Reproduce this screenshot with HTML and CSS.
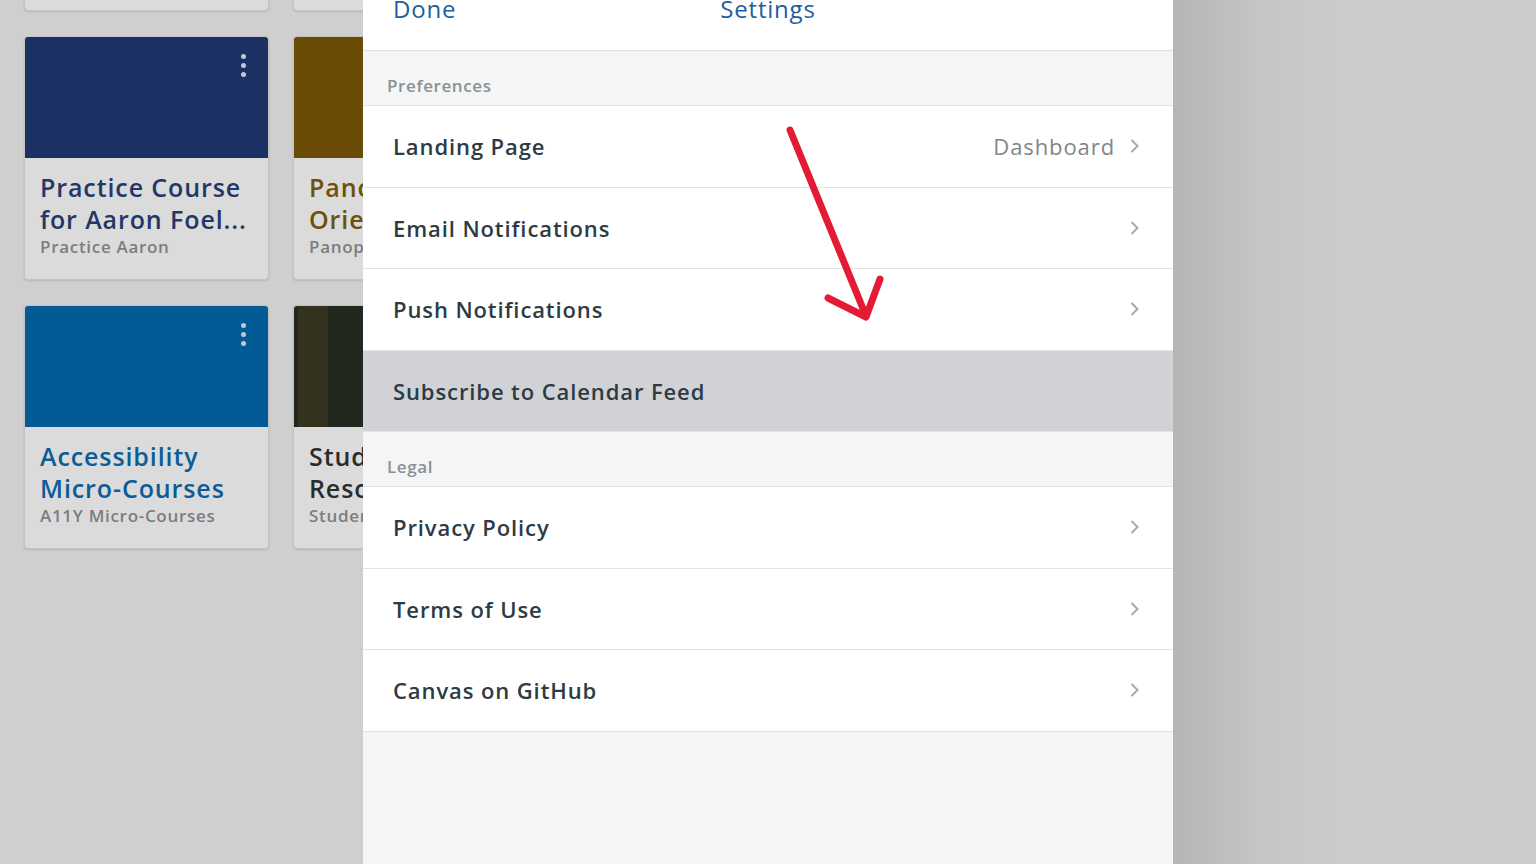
FILE: index.html
```html
<!DOCTYPE html>
<html lang="en">
<head>
    <meta name="viewport" content="width=device-width, initial-scale=1.0">
    <title>Settings</title>
    <link rel="stylesheet" href="styles.css">
</head>
<body>
    <!-- dashboard behind the sheet -->
    <div class="dashboard">
        <div class="cards">
            <div class="card"><div class="card-top navy"></div><div class="card-body"></div></div>
            <div class="card"><div class="card-top brown"></div><div class="card-body"></div></div>

            <div class="card">
                <div class="card-top navy">
                    <span class="dots"><i></i><i></i><i></i></span>
                </div>
                <div class="card-body">
                    <div class="card-title t-navy">Practice Course<br>for Aaron Foel...</div>
                    <div class="card-sub">Practice Aaron</div>
                </div>
            </div>
            <div class="card">
                <div class="card-top brown"></div>
                <div class="card-body">
                    <div class="card-title t-brown">Panopto<br>Orientation</div>
                    <div class="card-sub">Panopto</div>
                </div>
            </div>

            <div class="card">
                <div class="card-top blue">
                    <span class="dots"><i></i><i></i><i></i></span>
                </div>
                <div class="card-body">
                    <div class="card-title t-blue">Accessibility<br>Micro-Courses</div>
                    <div class="card-sub">A11Y Micro-Courses</div>
                </div>
            </div>
            <div class="card">
                <div class="card-top photo"></div>
                <div class="card-body">
                    <div class="card-title t-dark">Student<br>Resources</div>
                    <div class="card-sub">Students</div>
                </div>
            </div>
        </div>
    </div>

    <!-- settings sheet -->
    <div class="sheet">
        <div class="sheet-header">
            <span class="done">Done</span>
            <span class="sheet-title">Settings</span>
            <span></span>
        </div>

        <div class="group-label">Preferences</div>
        <div class="row">
            <span class="row-label">Landing Page</span>
            <span class="row-value">Dashboard</span>
            <svg class="chev" viewBox="0 0 10 16"><path d="M2 2l6 6-6 6"/></svg>
        </div>
        <div class="row">
            <span class="row-label">Email Notifications</span>
            <svg class="chev" viewBox="0 0 10 16"><path d="M2 2l6 6-6 6"/></svg>
        </div>
        <div class="row">
            <span class="row-label">Push Notifications</span>
            <svg class="chev" viewBox="0 0 10 16"><path d="M2 2l6 6-6 6"/></svg>
        </div>
        <div class="row selected">
            <span class="row-label">Subscribe to Calendar Feed</span>
        </div>

        <div class="group-label">Legal</div>
        <div class="row">
            <span class="row-label">Privacy Policy</span>
            <svg class="chev" viewBox="0 0 10 16"><path d="M2 2l6 6-6 6"/></svg>
        </div>
        <div class="row">
            <span class="row-label">Terms of Use</span>
            <svg class="chev" viewBox="0 0 10 16"><path d="M2 2l6 6-6 6"/></svg>
        </div>
        <div class="row">
            <span class="row-label">Canvas on GitHub</span>
            <svg class="chev" viewBox="0 0 10 16"><path d="M2 2l6 6-6 6"/></svg>
        </div>

        <!-- hand drawn annotation -->
        <svg class="annotation" viewBox="0 0 120 220">
            <path d="M7 8L83 194M45 176L83 195L97 157"/>
        </svg>
    </div>

    <div class="shade"></div>
</body>
</html>
```

FILE: styles.css
```css
:root {
    --ink: #2d3b45;
    --muted: #8b9096;
    --line: #e2e3e4;
    --sheet-bg: #f4f5f5;
}

body {
    margin: 0;
    height: 864px;
    overflow: hidden;
    display: flex;
    background: #cfcfcf;
    font-family: "Open Sans", Lato, sans-serif;
}

/* dashboard */
.dashboard {
    width: 363px;
    flex: none;
    overflow: hidden;
}

.cards {
    display: grid;
    grid-template-columns: repeat(2, 245px);
    grid-auto-rows: 244px;
    column-gap: 24px;
    row-gap: 25px;
    padding-left: 24px;
    margin-top: -233px;
}

.card {
    background: #dbdbdb;
    border: 1px solid #c3c3c3;
    border-radius: 4px;
    box-shadow: 0 1px 2px rgba(0, 0, 0, 0.12);
    overflow: hidden;
    display: flex;
    flex-direction: column;
}

.card-top {
    height: 121px;
    flex: none;
    position: relative;
}

.navy { background: #1b3163; }
.brown { background: #6a4c07; }
.blue { background: #035b96; }
.photo {
    background:
        radial-gradient(circle at 85% 50%, rgba(160, 120, 60, 0.45) 0 16px, transparent 17px),
        linear-gradient(90deg, #23281f 0 4px, #34311f 4px 34px, #23281f 34px);
}

.dots {
    position: absolute;
    top: 17px;
    right: 22px;
    display: flex;
    flex-direction: column;
    gap: 4px;
}

.dots i {
    width: 5px;
    height: 5px;
    border-radius: 50%;
    background: #c3c8d2;
}

.card-body {
    padding: 13px 15px 0;
}

.card-title {
    font-size: 25px;
    line-height: 32px;
    font-weight: 600;
    letter-spacing: 0.9px;
    white-space: nowrap;
}

.t-navy { color: #1f3868; }
.t-brown { color: #6e4f0b; }
.t-blue { color: #0c5c98; }
.t-dark { color: #2b2b2b; }

.card-sub {
    font-size: 17px;
    line-height: 24px;
    font-weight: 600;
    letter-spacing: 0.7px;
    color: #7b7d80;
    white-space: nowrap;
}

/* settings sheet */
.sheet {
    width: 810px;
    flex: none;
    background: var(--sheet-bg);
    position: relative;
}

.sheet-header {
    background: #fff;
    border-bottom: 1px solid #dcdde0;
    display: flex;
    justify-content: space-between;
    align-items: flex-end;
    padding: 0 30px 29px;
    box-sizing: border-box;
    height: 51px;
    font-size: 24px;
    line-height: 24px;
    letter-spacing: 0.8px;
    color: #1d5f9f;
}

.sheet-header > span {
    flex: 1;
}

.sheet-title {
    flex: none !important;
    text-align: center;
}

.group-label {
    height: 55px;
    box-sizing: border-box;
    border-bottom: 1px solid var(--line);
    padding: 23px 24px 0;
    font-size: 17px;
    line-height: 24px;
    font-weight: 600;
    letter-spacing: 0.6px;
    color: var(--muted);
}

.row {
    height: 81.5px;
    box-sizing: border-box;
    border-bottom: 1px solid var(--line);
    background: #fff;
    display: flex;
    align-items: center;
    padding: 0 33px 0 30px;
    font-size: 22px;
    letter-spacing: 0.9px;
    color: var(--ink);
}

.row.selected {
    background: #d1d2d6;
}

.row-label {
    flex: 1;
    font-weight: 600;
}

.row-value {
    color: #80868b;
    letter-spacing: 0.9px;
    margin-right: 14px;
}

.chev {
    width: 11px;
    height: 16px;
    fill: none;
    stroke: #a6a9ad;
    stroke-width: 2;
}

.annotation {
    position: absolute;
    left: 420px;
    top: 122px;
    width: 120px;
    height: 220px;
    fill: none;
    stroke: #e31b35;
    stroke-width: 7;
    stroke-linecap: round;
    stroke-linejoin: round;
}

.shade {
    flex: 1;
    background: linear-gradient(90deg, #b5b5b5, #c6c6c6 90px, #cbcbcb 160px);
}
```
